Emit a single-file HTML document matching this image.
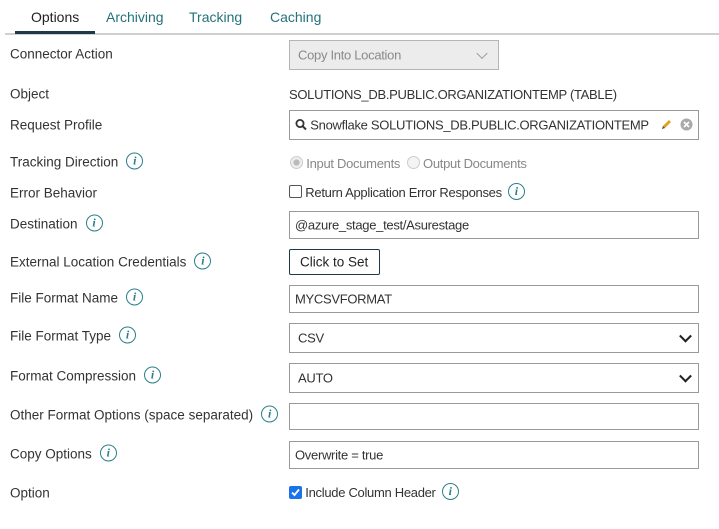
<!DOCTYPE html>
<html><head><meta charset="utf-8"><style>
body{margin:0;width:719px;height:529px;background:#fff;font-family:"Liberation Sans",sans-serif;font-size:13.5px;color:#333;position:relative;overflow:hidden}
.a{position:absolute;white-space:nowrap}
.tab{position:absolute;top:9px;font-size:14px;color:#24727c}
.lbl{position:absolute;left:10px;white-space:nowrap;transform:translateY(-50%)}
.box{position:absolute;left:289px;width:410px;border:1px solid #9a9a9a;box-sizing:border-box;background:#fff}
.box span{position:absolute;left:5px;top:50%;transform:translateY(-50%);white-space:nowrap}
.v{font-size:13px;letter-spacing:-0.3px}
.info{display:inline-block;width:15px;height:15px;border:1.3px solid #2a7f8a;border-radius:50%;color:#2a7f8a;font-family:"Liberation Serif",serif;font-style:italic;font-weight:bold;font-size:12px;line-height:15px;text-align:center;vertical-align:middle;margin-left:8px;position:relative;top:-2px}
.chev{position:absolute;right:8px;top:50%;width:7px;height:7px;border-right:2px solid #222;border-bottom:2px solid #222;transform:translateY(-70%) rotate(45deg)}
</style></head><body>
<div class="tab" style="left:31px;color:#222">Options</div>
<div class="tab" style="left:106px">Archiving</div>
<div class="tab" style="left:189px">Tracking</div>
<div class="tab" style="left:270px">Caching</div>
<div class="a" style="left:5px;top:33px;width:714px;height:2px;background:#d0d0d0"></div>
<div class="a" style="left:15px;top:31px;width:80px;height:3px;background:#1e3a46"></div>

<div class="lbl" style="top:54px">Connector Action</div>
<div class="lbl" style="top:94px">Object</div>
<div class="lbl" style="top:125px">Request Profile</div>
<div class="lbl" style="top:163px">Tracking Direction<span class="info">i</span></div>
<div class="lbl" style="top:193px">Error Behavior</div>
<div class="lbl" style="top:225px">Destination<span class="info">i</span></div>
<div class="lbl" style="top:263px">External Location Credentials<span class="info">i</span></div>
<div class="lbl" style="top:299px">File Format Name<span class="info">i</span></div>
<div class="lbl" style="top:337px">File Format Type<span class="info">i</span></div>
<div class="lbl" style="top:377px">Format Compression<span class="info">i</span></div>
<div class="lbl" style="top:416px">Other Format Options (space separated)<span class="info">i</span></div>
<div class="lbl" style="top:455px">Copy Options<span class="info">i</span></div>
<div class="lbl" style="top:493px">Option</div>

<div class="box" style="top:40px;height:30px;width:210px;background:#ececec;border-color:#b5b5b5"><span class="v" style="left:8px;color:#8a8a8a">Copy Into Location</span><div class="chev" style="right:12px;border-color:#999;border-width:1.5px"></div></div>
<div class="a v" style="left:289px;top:87px">SOLUTIONS_DB.PUBLIC.ORGANIZATIONTEMP (TABLE)</div>
<div class="box" style="top:110px;height:30px"><span class="v"><svg width="12" height="12" viewBox="0 0 12 12" style="vertical-align:-1px"><circle cx="5" cy="5" r="3.6" fill="none" stroke="#333" stroke-width="1.8"/><path d="M7.5 7.5L11 11" stroke="#333" stroke-width="2"/></svg> Snowflake SOLUTIONS_DB.PUBLIC.ORGANIZATIONTEMP</span>
<svg class="a" style="left:370px;top:8px" width="12" height="12" viewBox="0 0 12 12"><path d="M2 10L3 7L9 1L11 3L5 9Z" fill="#e0a020"/><path d="M2 10L3 7L5 9Z" fill="#555"/></svg>
<svg class="a" style="left:390px;top:7px" width="13" height="13" viewBox="0 0 13 13"><circle cx="6.5" cy="6.5" r="6" fill="#aaa"/><path d="M4 4L9 9M9 4L4 9" stroke="#fff" stroke-width="1.6"/></svg></div>
<div class="a v" style="left:290px;top:156px;color:#888"><span style="display:inline-block;width:11px;height:11px;border-radius:50%;border:1px solid #ccc;background:radial-gradient(#bbb 35%,#eee 45%);vertical-align:-1px"></span> Input Documents&nbsp;&nbsp;<span style="display:inline-block;width:11px;height:11px;border-radius:50%;border:1px solid #ccc;background:#f4f4f4;vertical-align:-1px"></span> Output Documents</div>
<div class="a v" style="left:289px;top:185px"><span style="display:inline-block;width:11px;height:11px;border:1px solid #555;border-radius:2px;vertical-align:-1px"></span> Return Application Error Responses<span class="info" style="margin-left:6px">i</span></div>
<div class="box" style="top:211px;height:28px"><span class="v">@azure_stage_test/Asurestage</span></div>
<div class="box" style="top:249px;height:26px;width:91px;border-color:#1e3a46;border-radius:2px"><span style="left:10px;color:#222">Click to Set</span></div>
<div class="box" style="top:285px;height:28px"><span class="v">MYCSVFORMAT</span></div>
<div class="box" style="top:323px;height:30px"><span class="v" style="left:8px">CSV</span><div class="chev"></div></div>
<div class="box" style="top:363px;height:30px"><span class="v" style="left:8px">AUTO</span><div class="chev"></div></div>
<div class="box" style="top:403px;height:27px"></div>
<div class="box" style="top:441px;height:28px"><span class="v">Overwrite = true</span></div>
<div class="a v" style="left:289px;top:485px"><span style="display:inline-block;width:13px;height:13px;background:#1a73e8;border-radius:2px;vertical-align:-2px;position:relative"><svg width="13" height="13" viewBox="0 0 13 13" style="position:absolute;left:0;top:0"><path d="M3 6.5L5.5 9L10 3.5" fill="none" stroke="#fff" stroke-width="1.8"/></svg></span> Include Column Header<span class="info" style="margin-left:6px">i</span></div>
</body></html>
